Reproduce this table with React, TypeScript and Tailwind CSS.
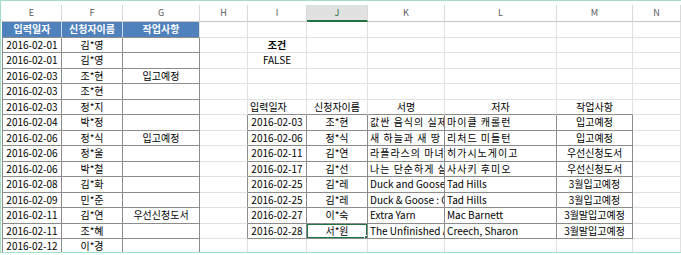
import React from 'react';

const colW = ['w-[60px]', 'w-[61px]', 'w-[77px]', 'w-[48px]', 'w-[59px]', 'w-[61px]', 'w-[77px]', 'w-[112px]', 'w-[76px]', 'w-[48px]'];
const letters = ['E', 'F', 'G', 'H', 'I', 'J', 'K', 'L', 'M', 'N'];

const leftRows: string[][] = [
    ['2016-02-01', '김*영', ''],
    ['2016-02-01', '김*영', ''],
    ['2016-02-03', '조*현', '입고예정'],
    ['2016-02-03', '조*현', ''],
    ['2016-02-03', '정*지', ''],
    ['2016-02-04', '박*정', ''],
    ['2016-02-06', '정*식', '입고예정'],
    ['2016-02-06', '정*울', ''],
    ['2016-02-06', '박*철', ''],
    ['2016-02-08', '김*화', ''],
    ['2016-02-09', '민*준', ''],
    ['2016-02-11', '김*연', '우선신청도서'],
    ['2016-02-11', '조*혜', ''],
    ['2016-02-12', '이*경', ''],
];

const rightRows: string[][] = [
    ['2016-02-03', '조*현', '값싼 음식의 실제 가격', '마이클 캐롤런', '입고예정'],
    ['2016-02-06', '정*식', '새 하늘과 새 땅', '리처드 미들턴', '입고예정'],
    ['2016-02-11', '김*연', '라플라스의 마녀', '히가시노게이고', '우선신청도서'],
    ['2016-02-17', '김*선', '나는 단순하게 살기로 했다', '사사키 후미오', '우선신청도서'],
    ['2016-02-25', '김*레', 'Duck and Goose', 'Tad Hills', '3월입고예정'],
    ['2016-02-25', '김*레', 'Duck & Goose : Goose Needs a Hug', 'Tad Hills', '3월입고예정'],
    ['2016-02-27', '이*숙', 'Extra Yarn', 'Mac Barnett', '3월말입고예정'],
    ['2016-02-28', '서*원', 'The Unfinished Angel', 'Creech, Sharon', '3월말입고예정'],
];

const ROWS = 15;

function inTable(r: number, c: number) {
    if (c >= 0 && c <= 2 && r >= 0 && r <= 14) return true;
    if (c >= 4 && c <= 8 && r >= 6 && r <= 13) return true;
    return false;
}

function cellText(r: number, c: number): string {
    if (r === 0 && c <= 2) return ['입력일자', '신청자이름', '작업사항'][c];
    if (r >= 1 && c <= 2) return leftRows[r - 1][c];
    if (r === 1 && c === 4) return '조건';
    if (r === 2 && c === 4) return 'FALSE';
    if (r === 5 && c >= 4 && c <= 8) return ['입력일자', '신청자이름', '서명', '저자', '작업사항'][c - 4];
    if (r >= 6 && r <= 13 && c >= 4 && c <= 8) return rightRows[r - 6][c - 4];
    return '';
}

function Cell({ r, c }: { r: number; c: number }) {
    const blue = r === 0 && c <= 2;
    const darkR = inTable(r, c) || inTable(r, c + 1);
    const darkB = inTable(r, c) || inTable(r + 1, c);
    const text = cellText(r, c);
    const bookCol = r >= 6 && (c === 6 || c === 7);
    const left = bookCol || (r === 5 && c === 4);
    const wide = bookCol && /[가-힣]/.test(text);
    const selected = r === 13 && c === 5;
    let rightCls = darkR ? 'border-r-[#8c8c8c]' : 'border-r-[#e1e1e1]';
    if (blue) rightCls = c === 2 ? 'border-r-[#e1e1e1]' : 'border-r-[#c9d7ea]';
    const bottomCls = darkB ? 'border-b-[#8c8c8c]' : 'border-b-[#e1e1e1]';
    const leftCls = c === 0 ? (blue ? 'border-l border-l-[#4f81bd]' : 'border-l border-l-[#8c8c8c]') : '';
    return (
        <div className={`${colW[c]} relative h-full shrink-0 border-r border-b ${rightCls} ${bottomCls} ${leftCls} ${blue ? 'bg-[#4f81bd] text-white font-bold' : 'text-black'} ${r === 1 && c === 4 ? 'font-bold' : ''} flex items-center ${left ? 'justify-start pl-[2px]' : 'justify-center'} overflow-hidden whitespace-nowrap`}>
            <span className={`leading-none ${wide ? 'tracking-[1px]' : ''}`}>{text}</span>
            {selected && (
                <div className="absolute -left-px -top-px -right-px -bottom-px border-2 border-[#217346]">
                    <div className="absolute -right-[4px] -bottom-[4px] w-[6px] h-[6px] bg-[#217346] border border-white" />
                </div>
            )}
        </div>
    );
}

export default function App() {
    return (
        <div className="w-[681px] h-[255px] bg-white overflow-hidden font-['Noto_Sans_CJK_KR','Noto_Sans',sans-serif] text-[10px]">
            <div className="w-[720px] h-[253px] border-l border-t border-b border-[#9fe0c6] pl-px pt-[4px] overflow-hidden">
                <div className="flex h-[17px]">
                    {letters.map((l, c) => (
                        <div key={l} className={`${colW[c]} shrink-0 h-full flex items-center justify-center border-r border-r-[#d9d9d9] text-[9px] ${c === 5 ? 'bg-[#e1e1e1] text-[#217346] border-b-2 border-b-[#217346]' : 'text-[#595959] border-b border-b-[#c6c6c6]'}`}>
                            {l}
                        </div>
                    ))}
                </div>
                {Array.from({ length: ROWS }).map((_, r) => (
                    <div key={r} className="flex h-[15.5px] shrink-0">
                        {letters.map((_, c) => (
                            <Cell key={c} r={r} c={c} />
                        ))}
                    </div>
                ))}
            </div>
        </div>
    );
}
